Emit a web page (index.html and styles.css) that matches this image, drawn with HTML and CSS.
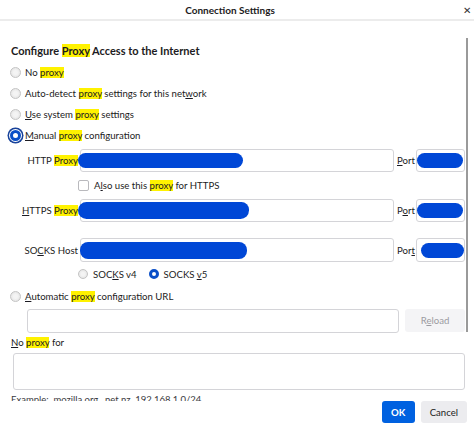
FILE: index.html
```html
<!DOCTYPE html>
<html>
<head>
    <title>Connection Settings</title>
    <link rel="stylesheet" href="styles.css">
</head>
<body>
    <div class="dialog">
        <header class="titlebar">
            <span></span>
            <span class="title">Connection Settings</span>
            <span class="close">&#x2715;</span>
        </header>

        <main class="content">
            <div class="scroll-thumb"></div>

            <h2 class="heading">Configure <mark>Proxy</mark> Access to the Internet</h2>

            <label class="option"><span class="radio"></span><span>No <mark>proxy</mark></span></label>
            <label class="option"><span class="radio"></span><span>Auto-detect <mark>proxy</mark> settings for this net<u>w</u>ork</span></label>
            <label class="option"><span class="radio"></span><span><u>U</u>se system <mark>proxy</mark> settings</span></label>
            <label class="option"><span class="radio checked focused"></span><span><u>M</u>anual <mark>proxy</mark> configuration</span></label>

            <div class="proxy-row first">
                <span class="field-label">HTTP <mark>Proxy</mark></span>
                <div class="field"><span class="scribble http"></span></div>
                <span class="port-label"><u>P</u>ort</span>
                <div class="field"><span class="scribble port"></span></div>
            </div>
            <div class="sub-row">
                <span class="checkbox"></span><span>A<u>l</u>so use this <mark>proxy</mark> for HTTPS</span>
            </div>
            <div class="proxy-row">
                <span class="field-label"><u>H</u>TTPS <mark>Proxy</mark></span>
                <div class="field"><span class="scribble https"></span></div>
                <span class="port-label">P<u>o</u>rt</span>
                <div class="field"><span class="scribble port"></span></div>
            </div>
            <div class="proxy-row socks">
                <span class="field-label">SO<u>C</u>KS Host</span>
                <div class="field"><span class="scribble socks"></span></div>
                <span class="port-label">Por<u>t</u></span>
                <div class="field"><span class="scribble port socks-port"></span></div>
            </div>
            <div class="sub-row">
                <span class="radio small"></span><span>SOC<u>K</u>S v4</span>
                <span class="radio small checked v5"></span><span>SOCKS <u>v</u>5</span>
            </div>

            <label class="option short"><span class="radio"></span><span><u>A</u>utomatic <mark>proxy</mark> configuration URL</span></label>
            <div class="url-row">
                <div class="field url"></div>
                <button class="reload" disabled>R<u>e</u>load</button>
            </div>

            <div class="noproxy-label"><u>N</u>o <mark>proxy</mark> for</div>
            <div class="textarea"></div>
            <div class="example">Example: .mozilla.org, .net.nz, 192.168.1.0/24</div>
        </main>

        <footer class="buttons">
            <button class="btn primary">OK</button>
            <button class="btn">Cancel</button>
        </footer>
    </div>
</body>
</html>
```

FILE: styles.css
```css
body {
    margin: 0;
    background-color: white;
    font-family: Lato, "Liberation Sans", sans-serif;
    font-size: 9.6px;
    color: #1c1b22;
}
.dialog {
    width: 474px;
    height: 427px;
    overflow: hidden;
}
.titlebar {
    display: grid;
    grid-template-columns: 1fr auto 1fr;
    align-items: center;
    height: 19px;
    padding-right: 14px;
    border-bottom: 2px solid #ececec;
}
.title {
    font-weight: bold;
    font-size: 10px;
}
.close {
    justify-self: end;
    margin-right: -11px;
    font-size: 10px;
    color: #333;
}
mark {
    background-color: #fff200;
    color: inherit;
}
u {
    text-decoration-thickness: 1px;
    text-underline-offset: 1px;
}
.content {
    position: relative;
    height: 380px;
    overflow: hidden;
    padding: 0 9px 0 11px;
}
.scroll-thumb {
    position: absolute;
    top: 17px;
    right: 6px;
    width: 2px;
    height: 294px;
    background-color: #9a9a9a;
}
.heading {
    margin: 23px 0 4px 0;
    font-size: 11px;
    font-weight: bold;
    line-height: 14px;
}
.option {
    display: flex;
    align-items: center;
    gap: 4px;
    height: 21px;
    margin-left: -1px;
}
.option.short {
    height: 20px;
}
.radio {
    width: 9px;
    height: 9px;
    border: 1px solid #c4c4c4;
    border-radius: 50%;
    background: radial-gradient(circle, #f4f4f4 30%, #dedede 100%);
    flex-shrink: 0;
}
.radio.checked {
    width: 5px;
    height: 5px;
    border: 3px solid #0a4fc8;
    background: white;
}
.radio.focused {
    box-shadow: 0 0 0 1px white, 0 0 0 2.5px #17429a;
}
.radio.small {
    width: 8px;
    height: 8px;
}
.radio.small.checked {
    width: 4px;
    height: 4px;
}
.radio.v5 {
    margin-left: 7px;
}
.proxy-row {
    display: grid;
    grid-template-columns: 67px 314px 18px 49px;
    column-gap: 2px;
    height: 23px;
}
.proxy-row.first {
    margin-top: 3px;
}
.proxy-row.socks {
    margin-top: 16px;
    height: 24px;
}
.field-label {
    align-self: center;
    text-align: right;
    white-space: nowrap;
}
.port-label {
    align-self: center;
    padding-left: 1px;
}
.field {
    display: flex;
    align-items: center;
    border: 1px solid #d4d4d8;
    border-radius: 3px;
    background-color: white;
}
.scribble {
    display: block;
    height: 15px;
    border-radius: 8px;
    background-color: #0047d6;
}
.scribble.http {
    width: 165px;
    margin-left: -3px;
}
.scribble.https {
    width: 171px;
    height: 17px;
    margin-left: -3px;
    border-radius: 9px 8px 9px 9px;
}
.scribble.socks {
    width: 167px;
    height: 17px;
    margin-left: -1px;
}
.scribble.port {
    width: 46px;
}
.scribble.socks-port {
    width: 44px;
    margin-left: 4px;
}
.sub-row {
    display: flex;
    align-items: center;
    gap: 5px;
    height: 27px;
    padding-left: 67px;
}
.proxy-row.socks + .sub-row {
    height: 24px;
}
.checkbox {
    width: 9px;
    height: 9px;
    border: 1px solid #b9b9bd;
    border-radius: 2px;
    background-color: white;
}
.url-row {
    display: flex;
    gap: 6px;
    height: 24px;
    margin: 3px 0 0 16px;
}
.field.url {
    width: 370px;
}
.reload {
    width: 60px;
    height: 23px;
    border: none;
    border-radius: 3px;
    background-color: #f4f4f6;
    color: #9b9ba1;
    font-family: inherit;
    font-size: 9.6px;
}
.noproxy-label {
    height: 20px;
    line-height: 20px;
}
.textarea {
    height: 35px;
    margin-left: 2px;
    border: 1px solid #d4d4d8;
    border-radius: 3px;
}
.example {
    margin-top: 4px;
    font-size: 9.5px;
    color: #3a3a40;
}
.buttons {
    display: flex;
    justify-content: flex-end;
    gap: 6px;
    padding-right: 7px;
}
.btn {
    height: 22px;
    padding: 0 9px;
    border: none;
    border-radius: 3px;
    background-color: #ececef;
    color: #1c1b22;
    font-family: inherit;
    font-size: 9.6px;
}
.btn.primary {
    width: 33px;
    padding: 0;
    background-color: #0061e0;
    color: white;
    font-weight: bold;
}
```
